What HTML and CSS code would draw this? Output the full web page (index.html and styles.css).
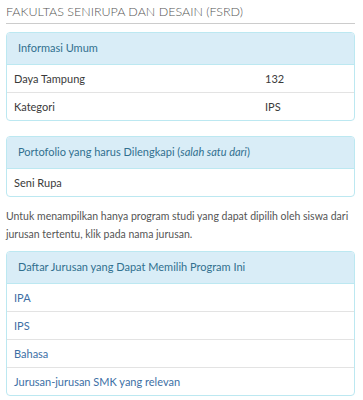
FILE: index.html
```html
<!DOCTYPE html>
<html lang="id">
  <head>
    <meta charset="UTF-8" />
    <title>FSRD</title>
    <link rel="stylesheet" href="styles.css">
  </head>
  <body>
    <h1 class="title">FAKULTAS SENIRUPA DAN DESAIN (FSRD)</h1>

    <div class="panel">
      <div class="panel-heading">Informasi Umum</div>
      <div class="info-row">
        <span>Daya Tampung</span>
        <span>132</span>
      </div>
      <div class="info-row">
        <span>Kategori</span>
        <span>IPS</span>
      </div>
    </div>

    <div class="panel">
      <div class="panel-heading">
        Portofolio yang harus Dilengkapi (<em>salah satu dari</em>)
      </div>
      <div class="list-item">Seni Rupa</div>
    </div>

    <p class="note">
      Untuk menampilkan hanya program studi yang dapat dipilih oleh siswa dari
      jurusan tertentu, klik pada nama jurusan.
    </p>

    <div class="panel">
      <div class="panel-heading">Daftar Jurusan yang Dapat Memilih Program Ini</div>
      <a class="list-item link" href="#">IPA</a>
      <a class="list-item link" href="#">IPS</a>
      <a class="list-item link" href="#">Bahasa</a>
      <a class="list-item link" href="#">Jurusan-jurusan SMK yang relevan</a>
    </div>
  </body>
</html>
```

FILE: styles.css
```css
body {
  margin: 0;
  padding: 5px 8px 0 6px;
  font-family: Lato, 'Open Sans', sans-serif;
  font-size: 11px;
  color: #3a3a3a;
  background: #fff;
}

.title {
  margin: 0 0 8px 0;
  padding-bottom: 4px;
  font-size: 12.5px;
  font-weight: 300;
  line-height: 14px;
  color: #555;
  border-bottom: 1px solid #ccc;
}

.panel {
  border: 1px solid #bce8f1;
  border-radius: 4px;
  margin-bottom: 15px;
  overflow: hidden;
}

.panel-heading {
  background: #d9edf7;
  color: #31708f;
  padding: 8px 11px 9px;
  line-height: 14px;
  border-bottom: 1px solid #bce8f1;
}

.info-row {
  display: grid;
  grid-template-columns: 251px 1fr;
  padding: 7px 7px 6px;
  line-height: 14px;
  border-bottom: 1px solid #e3e3e3;
}

.info-row:last-child,
.list-item:last-child {
  border-bottom: none;
}

.list-item {
  display: block;
  padding: 7px 7px 6px;
  line-height: 14px;
  border-bottom: 1px solid #e3e3e3;
}

.link {
  color: #3d6fa5;
  text-decoration: none;
}

.note {
  margin: -5px 0 8px 0;
  font-size: 10.5px;
  line-height: 18px;
  color: #555;
}
```
